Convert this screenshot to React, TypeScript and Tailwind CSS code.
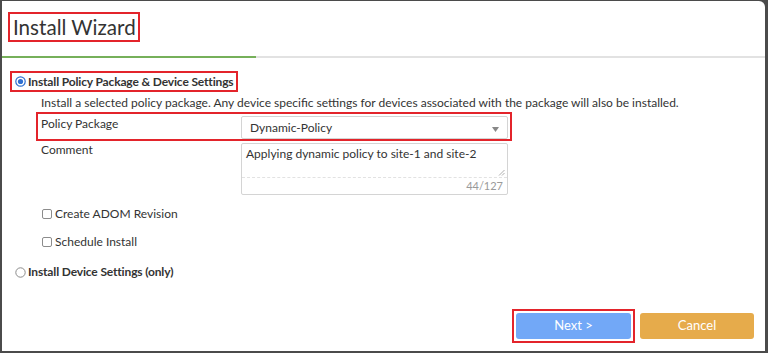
import React from "react";

const font = { fontFamily: "Lato, 'Noto Sans', sans-serif" };

function Radio({ checked }: { checked?: boolean }) {
  return checked ? (
    <svg width="11" height="11" viewBox="0 0 11 11" className="shrink-0">
      <circle cx="5.5" cy="5.5" r="4.7" fill="white" stroke="#2f6fd0" strokeWidth="1.2" />
      <circle cx="5.5" cy="5.5" r="2.6" fill="#2f6fd0" />
    </svg>
  ) : (
    <svg width="11" height="11" viewBox="0 0 11 11" className="shrink-0">
      <circle cx="5.5" cy="5.5" r="4.7" fill="white" stroke="#8a8a8a" strokeWidth="1" />
    </svg>
  );
}

function Check() {
  return <span className="inline-block w-[10px] h-[10px] border border-[#8c8c8c] rounded-[2px] bg-white shrink-0" />;
}

export default function App() {
  return (
    <div className="w-[768px] h-[353px] bg-[#4b4b4b] pt-[1px] pl-[2px] pr-[3px] pb-[2px]" style={font}>
      <div className="w-full h-full bg-white rounded-tr-[6px] flex flex-col text-[#333]">
        <div className="h-[55px] pl-[6px] pt-[11px]">
          <div className="inline-flex items-center h-[30px] pl-[3px] pr-[2px] border-2 border-[#e3242b]">
            <span className="text-[20.6px] leading-none text-[#333]">Install Wizard</span>
          </div>
        </div>
        <div className="flex h-[2px]">
          <div className="w-[254px] bg-[#76b05a]" />
          <div className="flex-1 bg-[#e2e2e2]" />
        </div>
        <div className="flex-1 flex flex-col pl-[8px] pt-[13px] text-[12px]">
          <div className="inline-flex self-start items-center gap-[2px] h-[21px] px-[3px] border-2 border-[#e3242b]">
            <Radio checked />
            <span className="font-bold text-[12px] tracking-[-0.15px] text-[#333]">Install Policy Package &amp; Device Settings</span>
          </div>
          <div className="pl-[31px] mt-[2px] leading-[18px]">
            Install a selected policy package. Any device specific settings for devices associated with the package will also be installed.
          </div>
          <div className="ml-[26px] mt-[0px] w-[476px] h-[29px] border-2 border-[#e3242b] flex items-start">
            <div className="w-[203px] pl-[3px] pt-[1px]">Policy Package</div>
            <div className="w-[267px] h-[23px] mt-[2px] border border-[#d4d4d4] rounded-[2px] flex items-center justify-between pl-[8px] pr-[8px]">
              <span>Dynamic-Policy</span>
              <svg width="7" height="5" viewBox="0 0 7 5" className="mt-[3px]">
                <path d="M0 0 L7 0 L3.5 5 Z" fill="#888" />
              </svg>
            </div>
          </div>
          <div className="ml-[31px] mt-[2px] flex items-start">
            <div className="w-[200px] leading-[14px] pt-[0px]">Comment</div>
            <div className="w-[267px] h-[52px] border border-[#d4d4d4] rounded-[2px] flex flex-col">
              <div className="h-[36px] relative pl-[4px] pt-[1px]">
                Applying dynamic policy to site-1 and site-2
                <svg width="7" height="7" viewBox="0 0 7 7" className="absolute right-[2px] bottom-[1px]">
                  <path d="M6.5 1 L1 6.5 M6.5 4 L4 6.5" stroke="#999" strokeWidth="0.8" />
                </svg>
              </div>
              <div className="border-t border-dashed border-[#e2e2e2] flex-1 flex items-center justify-end pr-[4px] text-[11px] text-[#9a9a9a]">
                44/127
              </div>
            </div>
          </div>
          <div className="ml-[32px] mt-[10px] flex items-center gap-[3px] h-[18px]">
            <Check />
            <span>Create ADOM Revision</span>
          </div>
          <div className="ml-[32px] mt-[10px] flex items-center gap-[3px] h-[18px]">
            <Check />
            <span>Schedule Install</span>
          </div>
          <div className="ml-[5px] mt-[12px] flex items-center gap-[2px] h-[18px]">
            <Radio />
            <span className="font-bold tracking-[-0.15px]">Install Device Settings (only)</span>
          </div>
          <div className="flex justify-end items-center pr-[11px] mt-[28px] gap-[5px]">
            <div className="border-2 border-[#e3242b] p-[2px]">
              <div className="w-[115px] h-[26px] bg-[#72a8f7] rounded-[3px] flex items-center justify-center text-white text-[13px]">Next &gt;</div>
            </div>
            <div className="w-[114px] h-[26px] bg-[#e6ab4b] rounded-[3px] flex items-center justify-center text-white text-[13px]">Cancel</div>
          </div>
        </div>
      </div>
    </div>
  );
}
